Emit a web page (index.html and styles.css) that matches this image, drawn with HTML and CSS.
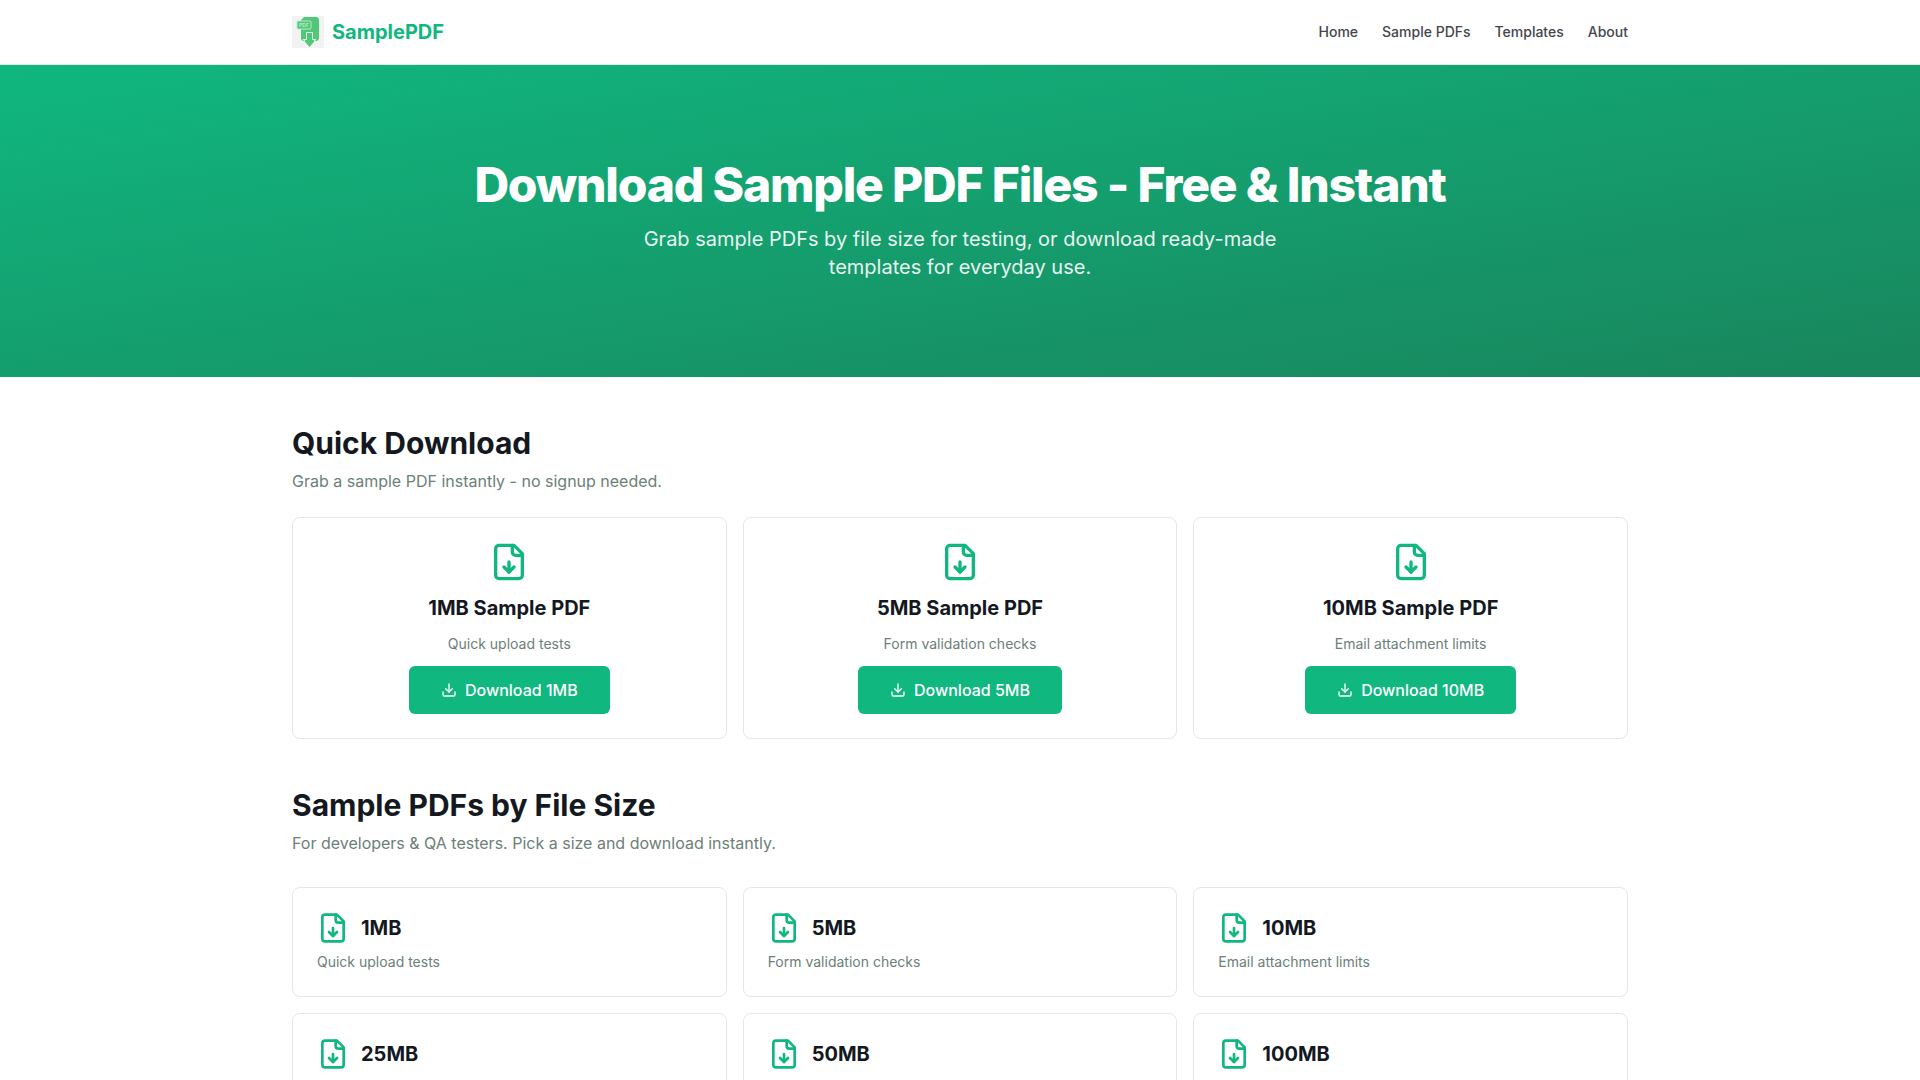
FILE: index.html
```html
<!DOCTYPE html>
<html lang="en">
<head>
    <meta charset="UTF-8">
    <meta name="viewport" content="width=device-width, initial-scale=1.0">
    <title>SamplePDF</title>
    <link rel="stylesheet" href="styles.css">
</head>
<body>
    <!-- Shared icons -->
    <svg class="sprite" aria-hidden="true">
        <symbol id="icon-file" viewBox="0 0 24 24">
            <path d="M15 2H6a2 2 0 0 0-2 2v16a2 2 0 0 0 2 2h12a2 2 0 0 0 2-2V7Z"/>
            <path d="M14 2v4a2 2 0 0 0 2 2h4"/>
            <path d="M12 18v-6"/>
            <path d="m9 15 3 3 3-3"/>
        </symbol>
        <symbol id="icon-download" viewBox="0 0 24 24">
            <path d="M12 15V3"/>
            <path d="M21 15v4a2 2 0 0 1-2 2H5a2 2 0 0 1-2-2v-4"/>
            <path d="m7 10 5 5 5-5"/>
        </symbol>
    </svg>

    <header class="header">
        <div class="container header-inner">
            <a href="#" class="brand">
                <svg class="logo" viewBox="0 0 32 32" aria-hidden="true">
                    <rect width="32" height="32" fill="#f3f3f3"/>
                    <path d="M12 1h12a3 3 0 0 1 3 3v18a3 3 0 0 1-3 3H12a3 3 0 0 1-3-3V4z" fill="#50c878"/>
                    <rect x="5" y="5" width="14" height="8" rx="1" fill="#50c878" stroke="#b9e8c9"/>
                    <text x="12" y="11" class="logo-text">PDF</text>
                    <path d="M14.500 16.500h6v7H24L17.500 31 11 23.500h3.500z" fill="#50c878"/>
                    <path d="M13 25l-2-1.500h3.500v-7h6v7H24L22 25" fill="none" stroke="#e4f4ea"/>
                </svg>
                <span>SamplePDF</span>
            </a>
            <nav class="nav">
                <a href="#">Home</a>
                <a href="#sizes">Sample PDFs</a>
                <a href="#">Templates</a>
                <a href="#">About</a>
            </nav>
        </div>
    </header>

    <section class="hero">
        <div class="container">
            <h1>Download Sample PDF Files - Free &amp; Instant</h1>
            <p>Grab sample PDFs by file size for testing, or download ready-made templates for everyday use.</p>
        </div>
    </section>

    <main class="container">
        <section class="section">
            <h2>Quick Download</h2>
            <p class="intro">Grab a sample PDF instantly - no signup needed.</p>
            <div class="grid quick-grid">
                <div class="card quick-card">
                    <svg class="icon icon-lg"><use href="#icon-file"/></svg>
                    <h3>1MB Sample PDF</h3>
                    <p class="note">Quick upload tests</p>
                    <button type="button" class="btn"><svg class="icon icon-sm"><use href="#icon-download"/></svg>Download 1MB</button>
                </div>
                <div class="card quick-card">
                    <svg class="icon icon-lg"><use href="#icon-file"/></svg>
                    <h3>5MB Sample PDF</h3>
                    <p class="note">Form validation checks</p>
                    <button type="button" class="btn"><svg class="icon icon-sm"><use href="#icon-download"/></svg>Download 5MB</button>
                </div>
                <div class="card quick-card">
                    <svg class="icon icon-lg"><use href="#icon-file"/></svg>
                    <h3>10MB Sample PDF</h3>
                    <p class="note">Email attachment limits</p>
                    <button type="button" class="btn"><svg class="icon icon-sm"><use href="#icon-download"/></svg>Download 10MB</button>
                </div>
            </div>
        </section>

        <section class="section" id="sizes">
            <h2>Sample PDFs by File Size</h2>
            <p class="intro">For developers &amp; QA testers. Pick a size and download instantly.</p>
            <div class="grid size-grid">
                <a href="#" class="card size-card">
                    <div class="size-title"><svg class="icon icon-md"><use href="#icon-file"/></svg><h3>1MB</h3></div>
                    <p class="note">Quick upload tests</p>
                </a>
                <a href="#" class="card size-card">
                    <div class="size-title"><svg class="icon icon-md"><use href="#icon-file"/></svg><h3>5MB</h3></div>
                    <p class="note">Form validation checks</p>
                </a>
                <a href="#" class="card size-card">
                    <div class="size-title"><svg class="icon icon-md"><use href="#icon-file"/></svg><h3>10MB</h3></div>
                    <p class="note">Email attachment limits</p>
                </a>
                <a href="#" class="card size-card">
                    <div class="size-title"><svg class="icon icon-md"><use href="#icon-file"/></svg><h3>25MB</h3></div>
                </a>
                <a href="#" class="card size-card">
                    <div class="size-title"><svg class="icon icon-md"><use href="#icon-file"/></svg><h3>50MB</h3></div>
                </a>
                <a href="#" class="card size-card">
                    <div class="size-title"><svg class="icon icon-md"><use href="#icon-file"/></svg><h3>100MB</h3></div>
                </a>
            </div>
        </section>
    </main>
</body>
</html>
```

FILE: styles.css
```css
* {
    box-sizing: border-box;
}

body {
    margin: 0;
    font-family: Inter, sans-serif;
    font-size: 16px;
    line-height: 24px;
    background: #fff;
    color: #14181f;
}

h1, h2, h3, p {
    margin: 0;
}

a {
    color: inherit;
    text-decoration: none;
}

.sprite {
    display: none;
}

.container {
    width: 100%;
    max-width: 1400px;
    margin: 0 auto;
    padding: 0 32px;
}

/* Header */
.header {
    border-bottom: 1px solid #e3e8e6;
}

.header-inner {
    height: 64px;
    display: flex;
    align-items: center;
    justify-content: space-between;
}

.brand {
    display: flex;
    align-items: center;
    gap: 8px;
    font-size: 20px;
    line-height: 28px;
    font-weight: 700;
    color: #10b77f;
}

.logo {
    width: 32px;
    height: 32px;
}

.logo-text {
    font-size: 5px;
    font-weight: 700;
    text-anchor: middle;
    fill: #b9e8c9;
}

.nav {
    display: flex;
    gap: 24px;
    font-size: 14px;
    line-height: 20px;
    font-weight: 500;
    color: #43464c;
}

.nav a:hover {
    color: #10b77f;
}

/* Hero */
.hero {
    padding: 96px 0;
    background: linear-gradient(to bottom right, #10b77f, #19855d);
    color: #fff;
    text-align: center;
}

.hero h1 {
    font-size: 48px;
    line-height: 48px;
    font-weight: 800;
    letter-spacing: -0.025em;
}

.hero p {
    max-width: 672px;
    margin: 16px auto 0;
    font-size: 20px;
    line-height: 28px;
    opacity: 0.9;
}

/* Sections */
.section {
    padding-top: 48px;
}

h2 {
    font-size: 30px;
    line-height: 36px;
    font-weight: 700;
}

h3 {
    font-size: 20px;
    line-height: 28px;
    font-weight: 700;
}

.intro {
    margin-top: 8px;
    color: #6c8078;
}

.grid {
    display: grid;
    grid-template-columns: repeat(3, 1fr);
    gap: 16px;
}

.quick-grid {
    margin-top: 24px;
}

.size-grid {
    margin-top: 32px;
}

.card {
    padding: 24px;
    border: 1px solid #e3e8e6;
    border-radius: 8px;
}

.quick-card {
    display: flex;
    flex-direction: column;
    align-items: center;
    gap: 12px;
}

.size-card {
    min-height: 110px;
}

.size-card:hover {
    border-color: #10b77f;
}

.size-title {
    display: flex;
    align-items: center;
    gap: 12px;
    margin-bottom: 8px;
}

.note {
    font-size: 14px;
    line-height: 20px;
    color: #6c8078;
}

.btn {
    display: flex;
    align-items: center;
    gap: 8px;
    height: 48px;
    padding: 0 32px;
    border: none;
    border-radius: 6px;
    background: #10b77f;
    color: #fff;
    font-family: inherit;
    font-size: 16px;
    font-weight: 500;
    cursor: pointer;
}

/* Icons */
.icon {
    fill: none;
    stroke: #10b77f;
    stroke-width: 2;
    stroke-linecap: round;
    stroke-linejoin: round;
}

.icon-lg {
    width: 40px;
    height: 40px;
}

.icon-md {
    width: 32px;
    height: 32px;
}

.icon-sm {
    width: 16px;
    height: 16px;
    stroke: #fff;
}
```
